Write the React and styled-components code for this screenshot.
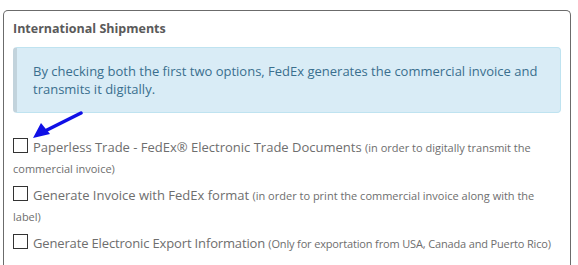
import React from 'react';
import styled, { createGlobalStyle } from 'styled-components';

const GlobalStyle = createGlobalStyle`
  body {
    margin: 0;
    background: #fff;
    font-family: 'Open Sans', 'Liberation Sans', sans-serif;
  }
`;

const Page = styled.div`
  padding: 10px 7px 0 3px;
  height: 265px;
  box-sizing: border-box;
  overflow: hidden;
`;

const Card = styled.div`
  position: relative;
  border: 1px solid #6b6b6b;
  border-bottom: none;
  border-radius: 5px 5px 0 0;
  padding: 10px 9px 20px 9px;
  height: 280px;
  box-sizing: border-box;
`;

const Title = styled.h4`
  margin: 0 0 10px;
  font-size: 12.5px;
  font-weight: 700;
  color: #5a5a5a;
  line-height: 16px;
`;

const Alert = styled.div`
  background: #d9ecf6;
  border: 1px solid #bfe3f0;
  border-left: 4px solid #c2d3dc;
  border-radius: 4px;
  padding: 14px 16px 14px 16px;
  color: #3a6f8e;
  font-size: 13px;
  line-height: 18px;
  margin-bottom: 24px;
`;

const OptionRow = styled.label`
  display: block;
  color: #6e6e6e;
  font-size: 13px;
  line-height: 20px;
  letter-spacing: ${(p) => (p.tight ? '-0.15px' : 'normal')};
  margin-bottom: ${(p) => (p.last ? 0 : 6)}px;
`;

const Box = styled.span`
  display: inline-block;
  width: 15px;
  height: 15px;
  border: 1.3px solid #333;
  box-sizing: border-box;
  vertical-align: -1px;
  margin-right: 5px;
`;

const Note = styled.span`
  font-size: 11px;
`;

const Arrow = styled.svg`
  position: absolute;
  left: 26px;
  top: 100px;
`;

const options = [
  {
    label: 'Paperless Trade - FedEx® Electronic Trade Documents',
    note: 'in order to digitally transmit the commercial invoice',
  },
  {
    label: 'Generate Invoice with FedEx format',
    note: 'in order to print the commercial invoice along with the label',
  },
  {
    label: 'Generate Electronic Export Information',
    note: 'Only for exportation from USA, Canada and Puerto Rico',
    tight: true,
  },
];

const App = () => (
  <>
    <GlobalStyle />
    <Page>
      <Card>
        <Title>International Shipments</Title>
        <Alert>
          By checking both the first two options, FedEx generates the commercial invoice and
          transmits it digitally.
        </Alert>
        {options.map((o, i) => (
          <OptionRow key={o.label} tight={o.tight} last={i === options.length - 1}>
            <Box />
            {o.label} <Note>({o.note})</Note>
          </OptionRow>
        ))}
        <Arrow width="60" height="32" viewBox="0 0 60 32">
          <line x1="51" y1="2" x2="17" y2="19" stroke="#1010e6" strokeWidth="3.5" strokeLinecap="round" />
          <polygon points="3,27 11,12 20,23" fill="#1010e6" />
        </Arrow>
      </Card>
    </Page>
  </>
);

export default App;
